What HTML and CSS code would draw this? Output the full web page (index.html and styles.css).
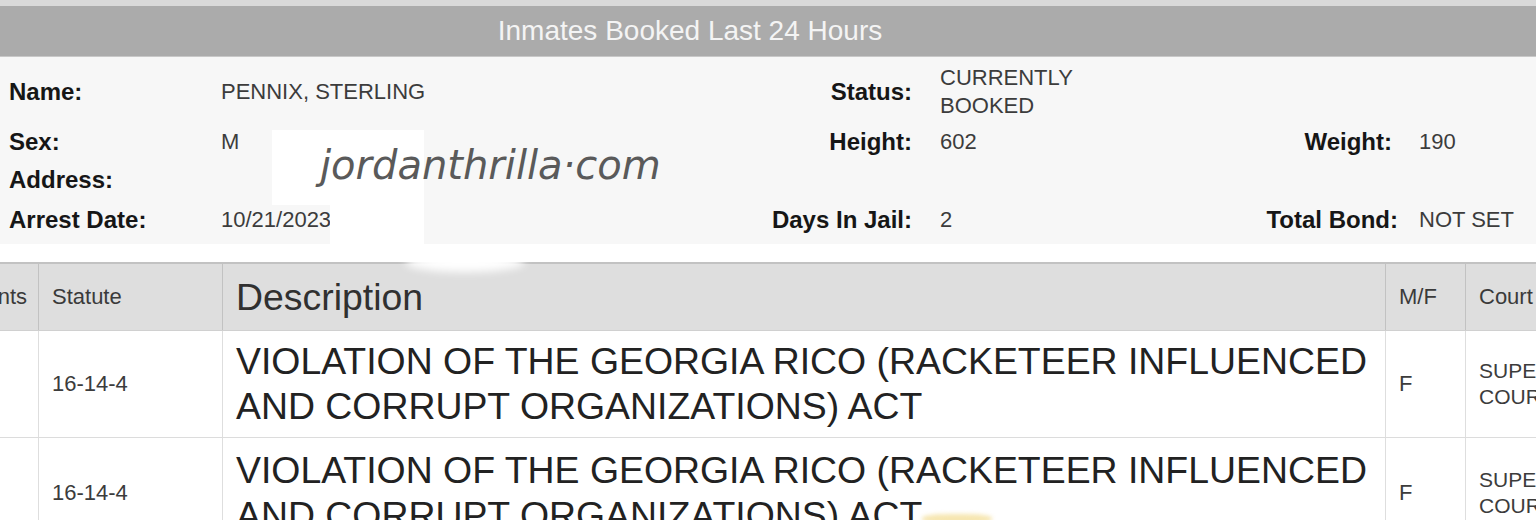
FILE: index.html
```html
<!DOCTYPE html>
<html>
<head>
<meta charset="utf-8">
<link rel="stylesheet" href="styles.css">
</head>
<body>
<div class="page">
  <div class="topstrip"></div>
  <div class="titlebar">Inmates Booked Last 24 Hours</div>
  <section class="info">
    <div class="lbl">Name:</div>
    <div class="val">PENNIX, STERLING</div>
    <div class="lbl r">Status:</div>
    <div class="val mid">CURRENTLY<br>BOOKED</div>
    <div></div>
    <div></div>

    <div class="lbl">Sex:</div>
    <div class="val">M</div>
    <div class="lbl r">Height:</div>
    <div class="val mid">602</div>
    <div class="lbl r">Weight:</div>
    <div class="val right">190</div>

    <div class="lbl">Address:</div>
    <div></div>
    <div></div>
    <div></div>
    <div></div>
    <div></div>

    <div class="lbl">Arrest Date:</div>
    <div class="val">10/21/2023</div>
    <div class="lbl r">Days In Jail:</div>
    <div class="val mid">2</div>
    <div class="lbl r tb">Total Bond:</div>
    <div class="val right">NOT SET</div>
  </section>
  <div class="whiteband"></div>
  <table class="charges">
    <colgroup>
      <col class="c-counts">
      <col class="c-statute">
      <col class="c-desc">
      <col class="c-mf">
      <col class="c-court">
    </colgroup>
    <thead>
      <tr>
        <th>Counts</th>
        <th>Statute</th>
        <th class="desc-h">Description</th>
        <th>M/F</th>
        <th>Court</th>
      </tr>
    </thead>
    <tbody>
      <tr>
        <td></td>
        <td>16-14-4</td>
        <td class="desc">VIOLATION OF THE GEORGIA RICO (RACKETEER INFLUENCED<br>AND CORRUPT ORGANIZATIONS) ACT</td>
        <td>F</td>
        <td class="court">SUPERIOR<br>COURT</td>
      </tr>
      <tr>
        <td></td>
        <td>16-14-4</td>
        <td class="desc">VIOLATION OF THE GEORGIA RICO (RACKETEER INFLUENCED<br>AND CORRUPT ORGANIZATIONS) ACT</td>
        <td>F</td>
        <td class="court">SUPERIOR<br>COURT</td>
      </tr>
    </tbody>
  </table>

  <div class="patch patch-a"></div>
  <div class="patch patch-b"></div>
  <div class="smudge"></div>
  <div class="yellow"></div>
  <div class="watermark">jordanthrilla·com</div>
</div>
</body>
</html>
```

FILE: styles.css
```css
html, body {
  margin: 0;
  padding: 0;
  background: #ffffff;
  overflow: hidden;
}

body {
  width: 1536px;
  height: 520px;
  font-family: "Liberation Sans", Arial, sans-serif;
}

.page {
  position: relative;
  width: 1536px;
  height: 520px;
  overflow: hidden;
}

.topstrip {
  height: 6px;
  background: #d9d9d9;
}

.titlebar {
  height: 50px;
  line-height: 50px;
  background: #ababab;
  color: #f4f4f4;
  font-size: 28px;
  text-align: center;
  padding-right: 156px;
  border-bottom: 1px solid #c8c8c8;
}

.info {
  background: #f7f7f7;
  display: grid;
  grid-template-columns: 212px 519px 172px 328px 152px 1fr;
  grid-template-rows: 56px 44px 32px 48px;
  align-items: center;
  padding: 7px 0 0 9px;
}

.lbl {
  font-weight: bold;
  font-size: 24px;
  color: #161616;
  white-space: nowrap;
}

.lbl.r {
  text-align: right;
}

.lbl.tb {
  margin-right: -6px;
}

.val {
  font-size: 22px;
  color: #3c3c3c;
  line-height: 28px;
  white-space: nowrap;
}

.val.mid {
  padding-left: 28px;
}

.val.right {
  padding-left: 27px;
}

.whiteband {
  height: 18px;
  background: #ffffff;
}

.charges {
  margin-left: -57px;
  border-collapse: collapse;
  table-layout: fixed;
  width: 1672px;
  color: #3a3a3a;
}

.c-counts { width: 95px; }
.c-statute { width: 184px; }
.c-desc { width: 1163px; }
.c-mf { width: 80px; }
.c-court { width: 150px; }

.charges th {
  background: #dedede;
  height: 66px;
  padding: 0 0 0 13px;
  text-align: left;
  font-weight: normal;
  font-size: 22px;
  color: #3a3a3a;
  border-top: 2px solid #c2c2c2;
  border-left: 1px solid #c2c2c2;
  border-bottom: 1px solid #d0d0d0;
  vertical-align: middle;
  white-space: nowrap;
}

.charges th:first-child {
  text-align: right;
  padding-right: 11px;
}

.charges th.desc-h {
  font-size: 37.4px;
  color: #303030;
}

.charges td {
  padding: 8px 0 8px 13px;
  font-size: 22px;
  color: #3c3c3c;
  border-left: 1px solid #dedede;
  border-bottom: 1px solid #dcdcdc;
  vertical-align: middle;
  white-space: nowrap;
  overflow: hidden;
}

.charges tbody tr:first-child td {
  height: 90px;
}

.charges tbody tr:nth-child(2) td {
  padding-top: 10px;
}

.charges td.desc {
  font-size: 37.4px;
  line-height: 45px;
  color: #222222;
}

.charges td.court {
  font-size: 21px;
  line-height: 26px;
}

.patch {
  position: absolute;
  background: #ffffff;
}

.patch-a {
  left: 272px;
  top: 130px;
  width: 152px;
  height: 75px;
}

.patch-b {
  left: 330px;
  top: 200px;
  width: 94px;
  height: 50px;
}

.smudge {
  position: absolute;
  left: 405px;
  top: 252px;
  width: 120px;
  height: 20px;
  border-radius: 50%;
  background: #ffffff;
  filter: blur(4px);
}

.yellow {
  position: absolute;
  left: 922px;
  top: 514px;
  width: 70px;
  height: 10px;
  border-radius: 40%;
  background: #f6e6b0;
  filter: blur(2px);
}

.watermark {
  position: absolute;
  left: 320px;
  top: 140px;
  font-family: "DejaVu Sans", sans-serif;
  font-style: italic;
  font-weight: 200;
  font-size: 40px;
  line-height: 50px;
  color: #5a5a5a;
  white-space: nowrap;
}
```
